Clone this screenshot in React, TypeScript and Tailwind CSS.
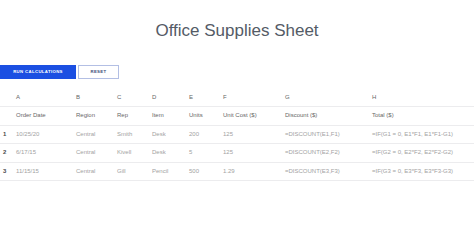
import React from 'react';

const cols = ['A', 'B', 'C', 'D', 'E', 'F', 'G', 'H'];

const headers = ['Order Date', 'Region', 'Rep', 'Item', 'Units', 'Unit Cost ($)', 'Discount ($)', 'Total ($)'];

const rows = [
  ['10/25/20', 'Central', 'Smith', 'Desk', '200', '125', '=DISCOUNT(E1,F1)', '=IF(G1 = 0, E1*F1, E1*F1-G1)'],
  ['6/17/15', 'Central', 'Kivell', 'Desk', '5', '125', '=DISCOUNT(E2,F2)', '=IF(G2 = 0, E2*F2, E2*F2-G2)'],
  ['11/15/15', 'Central', 'Gill', 'Pencil', '500', '1.29', '=DISCOUNT(E3,F3)', '=IF(G3 = 0, E3*F3, E3*F3-G3)'],
];

const grid = 'grid grid-cols-[16px_60px_41px_35px_37px_34px_62px_87px_1fr] items-center border-b border-[#ececee]';

const App: React.FC = () => {
  return (
    <div className="w-[474px] h-[248px] bg-white overflow-hidden" style={{ fontFamily: '"Liberation Sans", Arial, sans-serif' }}>
      {/* Title */}
      <h1 className="pt-[21px] text-center text-[17px] leading-[20px] font-normal text-[#545b66]">
        Office Supplies Sheet
      </h1>

      {/* Actions */}
      <div className="flex gap-[2px] mt-[24px]">
        <button className="h-[14px] w-[76px] bg-[#1b4fe2] text-white text-[4.3px] font-bold tracking-[0.35px] uppercase">
          Run Calculations
        </button>
        <button className="h-[14px] w-[41px] border border-[#b3bfe4] bg-white text-[#3e4f7a] text-[4.3px] font-bold tracking-[0.35px] uppercase">
          Reset
        </button>
      </div>

      {/* Sheet */}
      <div className="mt-[9px] text-[6px]">
        <div className={`${grid} h-[19px] text-[#666666]`}>
          <div />
          {cols.map(c => (
            <div key={c}>{c}</div>
          ))}
        </div>
        <div className={`${grid} h-[18.5px] text-[#676767]`}>
          <div />
          {headers.map(h => (
            <div key={h} className="whitespace-nowrap">{h}</div>
          ))}
        </div>
        {rows.map((row, i) => (
          <div key={i} className={`${grid} h-[18.5px] text-[#a2a2a2]`}>
            <div className="pl-[3px] font-bold text-[#4a4a4a]">{i + 1}</div>
            {row.map((cell, j) => (
              <div key={j} className="whitespace-nowrap">{cell}</div>
            ))}
          </div>
        ))}
      </div>
    </div>
  );
};

export default App;
